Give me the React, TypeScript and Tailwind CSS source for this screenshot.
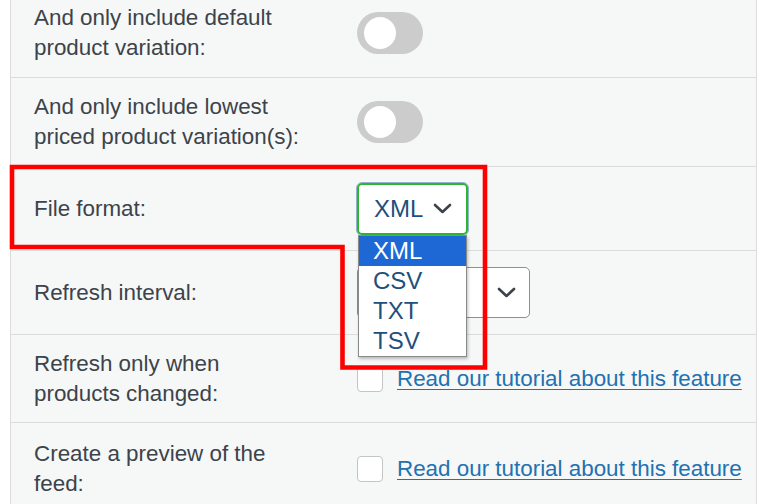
import type { ReactNode } from 'react';

function Toggle() {
    return (
        <div className="w-[66px] h-[42px] rounded-full bg-[#cccccc] flex items-center pl-[7px]">
            <div className="w-[32px] h-[32px] rounded-full bg-white" />
        </div>
    );
}

function Chevron({ className }: { className?: string }) {
    return (
        <svg className={className} width="19" height="11" viewBox="0 0 19 11" fill="none">
            <path d="M2 2 L9.5 9 L17 2" stroke="#3c434a" strokeWidth="2.6" strokeLinecap="round" strokeLinejoin="round" />
        </svg>
    );
}

function Checkbox() {
    return <div className="w-[26px] h-[26px] shrink-0 rounded-[4px] border border-[#c3c4c7] bg-white" />;
}

function TutorialLink() {
    return (
        <div className="flex items-center">
            <Checkbox />
            <a href="#" className="ml-[14px] text-[#2271b1] underline underline-offset-[3px] decoration-1">
                Read our tutorial about this feature
            </a>
        </div>
    );
}

interface RowProps {
    height: string;
    label: ReactNode;
    children: ReactNode;
}

function Row({ height, label, children }: RowProps) {
    return (
        <div className={`${height} flex items-center border-b border-[#dcdcde]`}>
            <div className="w-[346px] pl-[23px] shrink-0">{label}</div>
            <div className="flex-1">{children}</div>
        </div>
    );
}

const FORMATS = ['XML', 'CSV', 'TXT', 'TSV'];

export default function App() {
    return (
        <div
            className="relative w-[768px] h-[504px] overflow-hidden bg-white text-[#3c434a] text-[22.4px] leading-[30px]"
            style={{ fontFamily: '"Liberation Sans", Arial, sans-serif' }}
        >
            <div className="ml-[10px] w-[747px] mt-[-11px] bg-[#f6f7f7] border-x border-[#dcdcde]">
                <Row height="h-[89px]" label={<>And only include default<br />product variation:</>}>
                    <Toggle />
                </Row>
                <Row height="h-[89px]" label={<>And only include lowest<br />priced product variation(s):</>}>
                    <Toggle />
                </Row>
                <Row height="h-[84px]" label="File format:">
                    <div className="relative z-20 w-[111px]">
                        <div className="h-[52px] flex items-center justify-between pl-[15px] pr-[14px] bg-white border-2 border-[#2db52d] rounded-[5px] outline outline-1 outline-[#2f6fa8]/50 text-[24px] text-[#1f4f7c]">
                            <span>XML</span>
                            <Chevron />
                        </div>
                        <ul className="absolute top-[52px] left-[1px] w-[109px] bg-white border border-[#8a8a8a] shadow-[1px_2px_3px_rgba(0,0,0,0.25)] text-[24px] leading-[30px]">
                            {FORMATS.map((f, i) => (
                                <li
                                    key={f}
                                    className={i === 0 ? 'h-[30px] pl-[14px] bg-[#1d68d5] text-white' : 'h-[30px] pl-[14px] text-[#1f4f7c]'}
                                >
                                    {f}
                                </li>
                            ))}
                        </ul>
                    </div>
                </Row>
                <Row height="h-[84px]" label="Refresh interval:">
                    <div className="w-[173px] h-[51px] flex items-center justify-end pr-[13px] bg-white border border-[#8c8f94] rounded-[5px]">
                        <Chevron />
                    </div>
                </Row>
                <Row height="h-[88px]" label={<>Refresh only when<br />products changed:</>}>
                    <TutorialLink />
                </Row>
                <Row height="h-[92px]" label={<>Create a preview of the<br />feed:</>}>
                    <TutorialLink />
                </Row>
            </div>

            {/* annotation */}
            <svg className="absolute inset-0 z-30 pointer-events-none" width="768" height="504" viewBox="0 0 768 504">
                <path
                    d="M12 167 H485 V367.5 H342.5 V247 H12 Z"
                    fill="none"
                    stroke="#ff0000"
                    strokeWidth="4.6"
                    strokeLinejoin="miter"
                />
            </svg>
        </div>
    );
}
